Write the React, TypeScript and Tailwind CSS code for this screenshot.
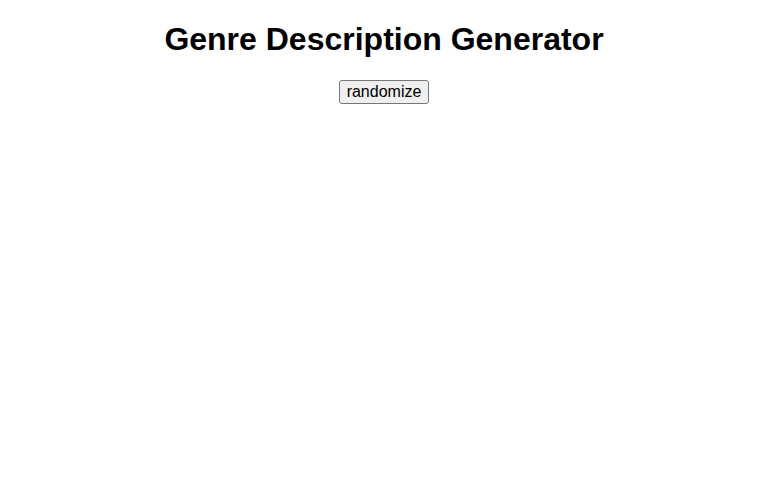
export default function App() {
  return (
    <div className="text-center text-black bg-white" style={{ fontFamily: '"Liberation Sans", Arial, sans-serif' }}>
      <h1 className="pt-[21px] mb-[22px] text-[32px] font-bold leading-[37px]">Genre Description Generator</h1>
      <button
        type="button"
        className="h-[24px] px-[7px] text-[16px] leading-[18px] bg-[#efefef] border border-[#767676] rounded-[3px] text-black"
      >
        randomize
      </button>
    </div>
  );
}
